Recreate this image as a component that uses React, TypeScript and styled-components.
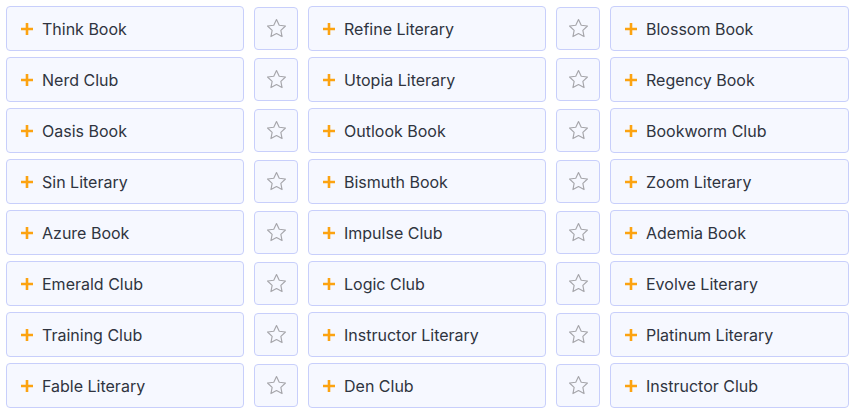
import React from "react";
import styled, { createGlobalStyle } from "styled-components";

const Global = createGlobalStyle`
  html, body { margin: 0; padding: 0; background: #fff; }
  body { font-family: Inter, "Noto Sans", sans-serif; }
`;

const Grid = styled.div`
  display: grid;
  grid-template-columns: 238px 44px 238px 44px 239px;
  grid-auto-rows: 45px;
  column-gap: 10px;
  row-gap: 6px;
  padding: 6px;
`;

const Card = styled.button`
  display: flex;
  align-items: center;
  gap: 8px;
  box-sizing: border-box;
  height: 45px;
  padding: 0 0 0 13px;
  border: 1px solid #c8cffb;
  border-radius: 4px;
  background: #f6f8ff;
  font-family: Inter, "Noto Sans", sans-serif;
  font-size: 16px;
  color: #2f3440;
  text-align: left;
  cursor: pointer;
`;

const StarButton = styled.button`
  display: flex;
  align-items: center;
  justify-content: center;
  box-sizing: border-box;
  height: 43px;
  align-self: center;
  padding: 0;
  border: 1px solid #c8cffb;
  border-radius: 4px;
  background: #f6f8ff;
  cursor: pointer;
`;

const Plus = () => (
  <svg width="14" height="14" viewBox="0 0 14 14">
    <path d="M7 1v12M1 7h12" stroke="#fca311" strokeWidth="2.6" />
  </svg>
);

const Star = () => (
  <svg width="23" height="23" viewBox="0 0 24 24" fill="none">
    <path
      d="M12 2.6l2.85 6 6.5.8-4.8 4.5 1.25 6.5L12 17.2l-5.8 3.2 1.25-6.5-4.8-4.5 6.5-.8z"
      stroke="#a6a6ab"
      strokeWidth="1.2"
      strokeLinejoin="round"
    />
  </svg>
);

const rows = [
  ["Think Book", "Refine Literary", "Blossom Book"],
  ["Nerd Club", "Utopia Literary", "Regency Book"],
  ["Oasis Book", "Outlook Book", "Bookworm Club"],
  ["Sin Literary", "Bismuth Book", "Zoom Literary"],
  ["Azure Book", "Impulse Club", "Ademia Book"],
  ["Emerald Club", "Logic Club", "Evolve Literary"],
  ["Training Club", "Instructor Literary", "Platinum Literary"],
  ["Fable Literary", "Den Club", "Instructor Club"],
];

export default function App() {
  return (
    <>
      <Global />
      <Grid>
        {rows.map((r, i) => (
          <React.Fragment key={i}>
            <Card><Plus />{r[0]}</Card>
            <StarButton aria-label="favorite"><Star /></StarButton>
            <Card><Plus />{r[1]}</Card>
            <StarButton aria-label="favorite"><Star /></StarButton>
            <Card><Plus />{r[2]}</Card>
          </React.Fragment>
        ))}
      </Grid>
    </>
  );
}
